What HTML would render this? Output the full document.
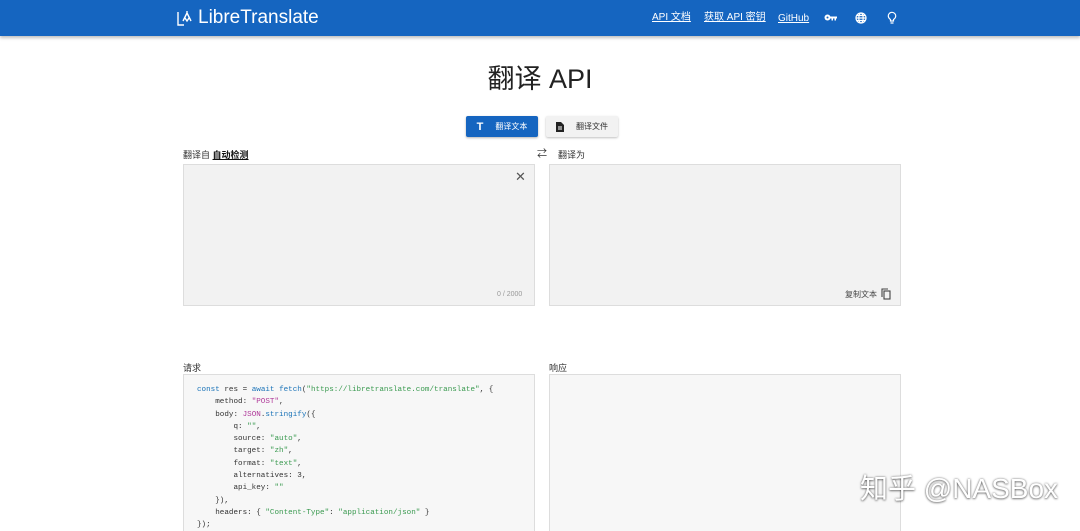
<!DOCTYPE html>
<html><head><meta charset="utf-8"><style>
*{margin:0;padding:0;box-sizing:border-box}
html,body{width:1080px;height:531px;overflow:hidden}
body{background:#fff;font-family:"Liberation Sans","Noto Sans CJK SC",sans-serif;position:relative;color:#222}
.hdr{position:absolute;left:0;top:0;width:1080px;height:36px;background:#1565c0;box-shadow:0 2px 3px rgba(0,0,0,.25)}
.logo{position:absolute;left:176px;top:8px;color:#fff;font-size:19px;line-height:20px;display:flex;align-items:center;gap:4px}
.nav{position:absolute;top:11px;line-height:14px;height:14px;color:#fff;font-size:10px;text-decoration:underline}
.abs{position:absolute}
h1{position:absolute;left:0;width:1080px;top:57px;text-align:center;font-size:27px;font-weight:400;color:#222}
.btn{position:absolute;top:116px;height:21px;font-size:8px;display:flex;align-items:center;justify-content:center;gap:12px;border-radius:2px}
.lbl{position:absolute;font-size:9px;color:#333}
.box{position:absolute;background:#f2f2f2;border:1px solid #ddd}
pre{position:absolute;left:197px;top:384px;font-family:"Liberation Mono",monospace;font-size:7.6px;line-height:12.3px;color:#333}
.k{color:#1a73b8}.s{color:#3a9a50}.p{color:#b03a9a}
</style></head><body>
<div class="hdr">
<div class="logo"><svg width="18" height="18" viewBox="0 0 18 18" fill="none" stroke="#fff" stroke-width="1.4"><path d="M2 3v13h6"/><path d="M7 12l4-8 4 8M9 9l2 3 2-3M11 4V2"/></svg>LibreTranslate</div>
<span class="nav" style="left:652px">API 文档</span>
<span class="nav" style="left:704px">获取 API 密钥</span>
<span class="nav" style="left:778px;top:12px">GitHub</span>
<svg class="abs" style="left:824px;top:13px" width="13" height="9" viewBox="0 0 13 9"><circle cx="3.5" cy="4.5" r="3" fill="#fff"/><circle cx="3.5" cy="4.5" r="1" fill="#1565c0"/><path d="M6 3.5h7v2h-1v2h-1.5v-2H9v2H7.5v-2H6z" fill="#fff"/></svg>
<svg class="abs" style="left:855px;top:12px" width="12" height="12" viewBox="0 0 12 12" fill="none" stroke="#fff" stroke-width="1.2"><circle cx="6" cy="6" r="5"/><ellipse cx="6" cy="6" rx="2.2" ry="5"/><path d="M1 6h10M1.8 3.5h8.4M1.8 8.5h8.4"/></svg>
<svg class="abs" style="left:887px;top:11px" width="10" height="14" viewBox="0 0 10 14" fill="none" stroke="#fff" stroke-width="1.2"><path d="M3.5 10V8.5C2 7.5 1.3 6.3 1.3 5A3.7 3.7 0 0 1 8.7 5c0 1.3-.7 2.5-2.2 3.5V10zM3.5 12h3"/></svg>
</div>
<h1>翻译 API</h1>
<div class="btn" style="left:466px;width:72px;background:#1565c0;color:#fff;box-shadow:0 1px 2px rgba(0,0,0,.3)"><b style="font-size:11px">T</b><span>翻译文本</span></div>
<div class="btn" style="left:546px;width:72px;background:#f2f2f2;color:#333;box-shadow:0 1px 2px rgba(0,0,0,.25)"><svg width="8" height="10" viewBox="0 0 8 10"><path d="M0 0h5l3 3v7H0z" fill="#222"/><path d="M2 5h4M2 7h4" stroke="#fff"/></svg><span>翻译文件</span></div>
<div class="lbl" style="left:183px;top:148px">翻译自 <b style="text-decoration:underline;color:#111">自动检测</b></div>
<div class="lbl" style="left:537px;top:145px;font-size:10px">⇄</div>
<div class="lbl" style="left:558px;top:148px">翻译为</div>
<div class="box" style="left:183px;top:164px;width:352px;height:142px"></div>
<div class="abs" style="left:515px;top:169px;font-size:13px;color:#555">✕</div>
<div class="abs" style="left:497px;top:291px;font-size:7px;color:#999">0 / 2000</div>
<div class="box" style="left:549px;top:164px;width:352px;height:142px"></div>
<div class="abs" style="left:845px;top:289px;font-size:8px;color:#444">复制文本</div>
<svg class="abs" style="left:881px;top:288px" width="10" height="12" viewBox="0 0 10 12" fill="none" stroke="#444" stroke-width="1.1"><rect x="3" y="3" width="6" height="8"/><path d="M1 9V1h6"/></svg>
<div class="lbl" style="left:183px;top:361px">请求</div>
<div class="lbl" style="left:549px;top:361px">响应</div>
<div class="box" style="left:183px;top:374px;width:352px;height:170px;background:#f7f7f7"></div>
<div class="box" style="left:549px;top:374px;width:352px;height:170px;background:#f7f7f7"></div>
<pre><span class="k">const</span> res = <span class="k">await</span> <span class="k">fetch</span>(<span class="s">"https://libretranslate.com/translate"</span>, {
    method: <span class="p">"POST"</span>,
    body: <span class="p">JSON</span>.<span class="k">stringify</span>({
        q: <span class="s">""</span>,
        source: <span class="s">"auto"</span>,
        target: <span class="s">"zh"</span>,
        format: <span class="s">"text"</span>,
        alternatives: 3,
        api_key: <span class="s">""</span>
    }),
    headers: { <span class="s">"Content-Type"</span>: <span class="s">"application/json"</span> }
});</pre>
<div class="abs" style="left:860px;top:467px;font-size:28px;color:#fff;text-shadow:0 0 2px rgba(0,0,0,.5),0 1px 2px rgba(0,0,0,.4)">知乎 @NASBox</div>
</body></html>
